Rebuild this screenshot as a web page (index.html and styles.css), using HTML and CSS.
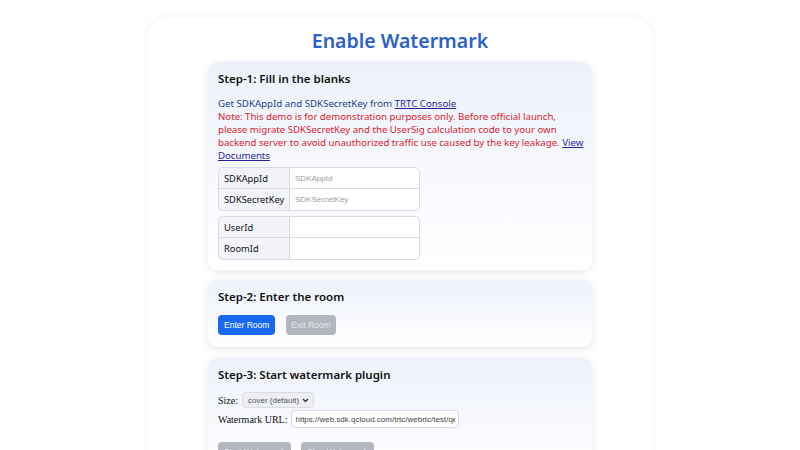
FILE: index.html
```html
<!DOCTYPE html>
<html>
<head>
<meta charset="utf-8">
<link rel="stylesheet" href="styles.css">
</head>
<body>
<div class="page">
  <h1 class="title">Enable Watermark</h1>
  <section class="card">
    <h2 class="step">Step-1: Fill in the blanks</h2>
    <div class="info">
      <p class="tip">Get SDKAppId and SDKSecretKey from <a href="#">TRTC Console</a></p>
      <p class="note">Note: This demo is for demonstration purposes only. Before official launch, please migrate SDKSecretKey and the UserSig calculation code to your own backend server to avoid unauthorized traffic use caused by the key leakage. <a href="#">View Documents</a></p>
    </div>
    <div class="group">
      <div class="row"><span class="label">SDKAppId</span><input class="field" placeholder="SDKAppId"></div>
      <div class="row"><span class="label">SDKSecretKey</span><input class="field" placeholder="SDKSecretKey"></div>
    </div>
    <div class="group">
      <div class="row"><span class="label">UserId</span><input class="field"></div>
      <div class="row"><span class="label">RoomId</span><input class="field"></div>
    </div>
  </section>
  <section class="card">
    <h2 class="step">Step-2: Enter the room</h2>
    <div class="buttons">
      <button class="btn primary">Enter Room</button>
      <button class="btn disabled">Exit Room</button>
    </div>
  </section>
  <section class="card">
    <h2 class="step">Step-3: Start watermark plugin</h2>
    <div class="opt first">Size:
      <span class="selwrap">
        <select class="sel"><option>cover (default)</option></select>
        <svg class="chev" width="7" height="5" viewBox="0 0 7 5"><path d="M1 1 L3.5 3.5 L6 1" fill="none" stroke="#333" stroke-width="1.4"/></svg>
      </span>
    </div>
    <div class="opt">Watermark URL: <input class="url" value="https://web.sdk.qcloud.com/trtc/webrtc/test/qer-test/watermark.png"></div>
    <div class="buttons lower">
      <button class="btn disabled wide">Start Watermark</button>
      <button class="btn disabled wide">Stop Watermark</button>
    </div>
  </section>
</div>
</body>
</html>
```
FILE: styles.css
```css
html, body { margin: 0; padding: 0; background: #fff; }
body { font-family: "Noto Sans", "Open Sans", sans-serif; color: #111; }
.page {
  width: 384px;
  margin: 17px auto 0;
  padding: 11px 60px 20px;
  border-radius: 20px;
  background: #fff;
  box-shadow: 0 0 10px rgba(0,0,0,0.06);
}
.title {
  margin: 0 0 8px;
  text-align: center;
  font-size: 19.5px;
  line-height: 26px;
  font-weight: 600;
  color: #2a62c9;
}
.card {
  padding: 8px 10px 10px;
  margin-bottom: 10px;
  border-radius: 10px;
  background: linear-gradient(180deg, #edf1fb 0%, #ffffff 100%);
  box-shadow: 0 2px 8px rgba(0,0,0,0.1);
}
.step {
  margin: 0;
  font-size: 11.5px;
  line-height: 18px;
  font-weight: 600;
  color: #111;
}
.info { margin: 9px -3px 0 0; font-size: 9.7px; line-height: 13px; }
.info p { margin: 0; }
.tip { color: #1f3f8c; }
.note { color: #d9232e; letter-spacing: -0.03px; }
.info a { color: #2a1fa6; text-decoration: underline; }
.group { width: 202px; margin-top: 5px; }
.row { display: flex; height: 22px; }
.label {
  width: 65px;
  padding-left: 5px;
  display: flex;
  align-items: center;
  font-size: 9.3px;
  background: #f2f4fa;
  border: 1px solid #d8dbe3;
  border-right: none;
}
.row + .row .label, .row + .row .field { border-top: none; }
.row:first-child .label { border-top-left-radius: 5px; }
.row:last-child .label { border-bottom-left-radius: 5px; }
.row:first-child .field { border-top-right-radius: 5px; }
.row:last-child .field { border-bottom-right-radius: 5px; }
.field {
  flex: 1;
  min-width: 0;
  margin: 0;
  padding: 0 5px;
  border: 1px solid #d8dbe3;
  background: #fff;
  font-family: "Liberation Sans", Arial, sans-serif;
  font-size: 8px;
  outline: none;
}
.field::placeholder { color: #9a9ea6; }
.buttons { display: flex; gap: 11px; margin-top: 9px; }
.btn {
  border: none;
  border-radius: 4px;
  height: 20px;
  padding: 0 6px;
  font-family: "Liberation Sans", Arial, sans-serif;
  font-size: 8.5px;
  color: #fff;
  white-space: nowrap;
}
.primary { background: #1769f0; }
.disabled { background: #b3b6be; color: #e6e7ea; padding: 0 5px; }
.card:nth-of-type(2) { padding-bottom: 12px; margin-bottom: 11px; }
.opt {
  font-family: "Liberation Serif", "Times New Roman", serif;
  font-size: 10px;
  margin-top: 2px;
  display: flex;
  align-items: center;
  gap: 4px;
  color: #111;
}
.opt.first { margin-top: 8px; }
.selwrap { position: relative; display: inline-flex; }
.sel {
  appearance: none;
  -webkit-appearance: none;
  width: 72px;
  height: 16px;
  margin: 0;
  padding: 0 12px 0 5px;
  font-family: "Liberation Sans", Arial, sans-serif;
  font-size: 8px;
  border: 1px solid #d8dbe3;
  border-radius: 4px;
  background: #eceef2;
  color: #555;
}
.chev { position: absolute; right: 5px; top: 6px; pointer-events: none; }
.url {
  width: 168px;
  height: 18px;
  box-sizing: border-box;
  padding: 0 3px;
  font-family: "Liberation Sans", Arial, sans-serif;
  font-size: 8px;
  border: 1px solid #d8dbe3;
  border-radius: 4px;
  color: #444;
}
.lower { margin-top: 14px; gap: 10px; }
.wide { width: 73px; padding: 0; }
```
